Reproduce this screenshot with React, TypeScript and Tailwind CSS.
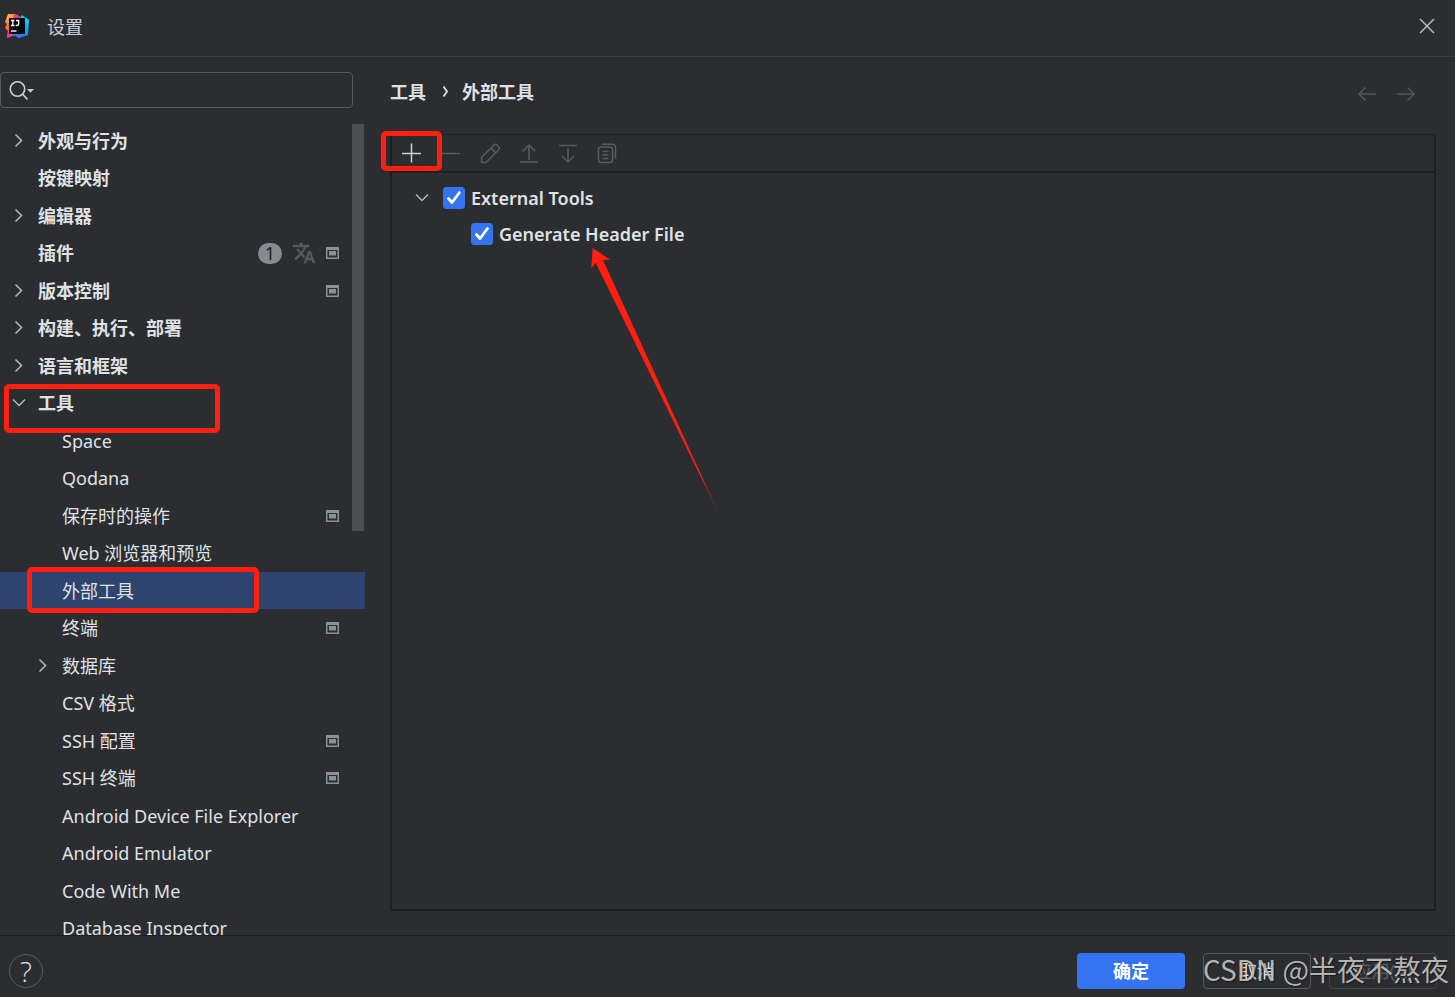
import type { ReactNode } from "react";
import { MdTranslate } from "react-icons/md";

type TreeItem = {
  label: string;
  child?: boolean;
  arrow?: "right" | "down";
  project?: boolean;
  plugin?: boolean;
  selected?: boolean;
  mark?: string;
};

const items: TreeItem[] = [
  { label: "外观与行为", arrow: "right" },
  { label: "按键映射" },
  { label: "编辑器", arrow: "right" },
  { label: "插件", project: true, plugin: true },
  { label: "版本控制", arrow: "right", project: true },
  { label: "构建、执行、部署", arrow: "right" },
  { label: "语言和框架", arrow: "right" },
  { label: "工具", arrow: "down", mark: "top-0 left-1 w-[216px] h-[49px]" },
  { label: "Space", child: true },
  { label: "Qodana", child: true },
  { label: "保存时的操作", child: true, project: true },
  { label: "Web 浏览器和预览", child: true },
  { label: "外部工具", child: true, selected: true, mark: "-top-[5px] left-[27px] w-[232px] h-[46px]" },
  { label: "终端", child: true, project: true },
  { label: "数据库", child: true, arrow: "right" },
  { label: "CSV 格式", child: true },
  { label: "SSH 配置", child: true, project: true },
  { label: "SSH 终端", child: true, project: true },
  { label: "Android Device File Explorer", child: true },
  { label: "Android Emulator", child: true },
  { label: "Code With Me", child: true },
  { label: "Database Inspector", child: true },
];

function Logo() {
  return (
    <svg width="24" height="24" viewBox="0 0 24 24" aria-hidden="true">
      <defs>
        <linearGradient id="warm" x1="0" y1="0" x2="0.5" y2="1">
          <stop offset="0" stopColor="#fcc84a" />
          <stop offset="0.45" stopColor="#ff7a2f" />
          <stop offset="1" stopColor="#fe2857" />
        </linearGradient>
        <linearGradient id="cool" x1="0.7" y1="0" x2="0.3" y2="1">
          <stop offset="0" stopColor="#07d8f5" />
          <stop offset="1" stopColor="#0878f0" />
        </linearGradient>
      </defs>
      <path d="M3 0h7l5 3 2 8-9 9-6 4 1-7-3-3 2-4-2-2z" fill="url(#warm)" />
      <path d="M9 0l4 1 4 5-2 6-7-6z" fill="#fe2d75" />
      <path d="M3 16l6 2 2 3-9 3z" fill="#f930a0" />
      <path d="M17 1l7 5-1 15-9 3-7-4 7-15z" fill="url(#cool)" />
      <path d="M7 20l5-1 4 4-2 1z" fill="#4b6df0" />
      <rect x="4" y="4" width="16" height="16" fill="#080508" />
      <path
        d="M6 6.500h3.500M7.800 6.500v5M6 11.500h3.500M11 6.500h2.700v3.200q0 1.800-1.900 1.800h-1"
        fill="none"
        stroke="#fff"
        strokeWidth="1.300"
      />
      <path d="M6 17h5.500" stroke="#fff" strokeWidth="1.400" />
    </svg>
  );
}

function Arrow({ dir }: { dir: "right" | "down" }) {
  return (
    <svg width="24" height="24" viewBox="0 0 24 24" fill="none" stroke="#b4b8bf" strokeWidth="1.500" aria-hidden="true">
      {dir === "right" ? <path d="M8.500 5.500l6 6-6 6" /> : <path d="M6 8.500l6 6 6-6" />}
    </svg>
  );
}

function ProjectIcon() {
  return (
    <svg width="13" height="12" viewBox="0 0 13 12" aria-hidden="true">
      <rect width="13" height="12" fill="#87939a" />
      <rect x="1.500" y="3" width="10" height="7.500" fill="#2b2d30" />
      <rect x="3" y="4" width="7" height="4.500" fill="#87939a" />
    </svg>
  );
}

function ToolButton({ label, active, children }: { label: string; active?: boolean; children: ReactNode }) {
  return (
    <button
      aria-label={label}
      disabled={!active}
      className={`flex w-[39px] h-9 items-center justify-center ${active ? "text-[#ced0d6]" : "text-[#5a5b5d]"}`}
    >
      <svg width="24" height="24" viewBox="0 0 24 24" fill="none" stroke="currentColor" strokeWidth="1.500" aria-hidden="true">
        {children}
      </svg>
    </button>
  );
}

function CheckRow({ id, label }: { id: string; label: string }) {
  return (
    <div className="flex items-center gap-1.5">
      <span className="grid">
        <input
          id={id}
          type="checkbox"
          defaultChecked
          className="peer col-start-1 row-start-1 w-[22px] h-[22px] appearance-none rounded-[3px] border border-[#6f737a] checked:border-[#3574f0] checked:bg-[#3574f0]"
        />
        <svg
          viewBox="0 0 22 22"
          fill="none"
          className="pointer-events-none invisible col-start-1 row-start-1 h-[22px] w-[22px] peer-checked:visible"
          aria-hidden="true"
        >
          <path d="M5.500 11.500l3.500 4L16.500 5.500" stroke="#fff" strokeWidth="2.800" strokeLinecap="round" strokeLinejoin="round" />
        </svg>
      </span>
      <label htmlFor={id} className="font-semibold">{label}</label>
    </div>
  );
}

function Mark({ className }: { className: string }) {
  return <div className={`pointer-events-none absolute z-10 rounded-[5px] border-[5px] border-[#ff1e10] ${className}`} />;
}

export default function App() {
  return (
    <div className="relative flex h-screen flex-col overflow-hidden bg-[#2b2d30] text-lg leading-6 text-[#dfe1e5] font-['Noto_Sans','Noto_Sans_CJK_SC',sans-serif]">
      {/* Title bar */}
      <header className="flex h-[57px] shrink-0 items-center border-b border-[#3c3e41] pb-1 pl-[5px] pr-4">
        <Logo />
        <h1 className="ml-[18px] flex-1 pt-0.5 text-[#ced0d6]">设置</h1>
        <button aria-label="关闭" className="text-[#b8babf]">
          <svg width="24" height="24" viewBox="0 0 24 24" fill="none" stroke="currentColor" strokeWidth="1.500">
            <path d="M5 5l14 14M19 5L5 19" />
          </svg>
        </button>
      </header>

      <div className="flex min-h-0 flex-1">
        {/* Sidebar */}
        <aside className="flex w-[365px] shrink-0 flex-col pt-[15px]">
          <div className="mr-3 flex h-9 shrink-0 items-center rounded border border-[#55585c] pl-2">
            <svg width="26" height="20" viewBox="0 0 26 20" fill="none" aria-hidden="true">
              <circle cx="8.500" cy="9" r="7.200" stroke="#ced0d6" strokeWidth="1.600" />
              <path d="M13.500 14l5 5.500" stroke="#ced0d6" strokeWidth="1.600" />
              <path d="M18 9h7l-3.500 3.800z" fill="#ced0d6" />
            </svg>
            <input aria-label="搜索" className="min-w-0 flex-1 bg-transparent px-2 outline-none" />
          </div>

          <div className="relative mt-3.5 min-h-0 flex-1 overflow-hidden">
            <ul>
              {items.map((item) => (
                <li
                  key={item.label}
                  className={`relative flex items-center odd:h-[37px] even:h-[38px] pr-[26px] ${
                    item.child ? "pl-[31px]" : "pl-[7px] font-bold"
                  } ${item.selected ? "bg-[#2e436e]" : ""}`}
                >
                  <span className="mr-[7px] w-6">{item.arrow && <Arrow dir={item.arrow} />}</span>
                  <button className="flex-1 text-left">{item.label}</button>
                  {item.plugin && (
                    <>
                      <span className="mr-2.5 flex h-[21px] w-6 items-center justify-center rounded-full bg-[#868a91] font-normal text-[#1e1f22]">
                        1
                      </span>
                      <MdTranslate
                        className="mr-2.5 size-6 text-[#545c61] [&>path:first-child]:stroke-none"
                        stroke="currentColor"
                        strokeWidth="0.500"
                      />
                    </>
                  )}
                  {item.project && <ProjectIcon />}
                  {item.mark && <Mark className={item.mark} />}
                </li>
              ))}
            </ul>
            <div className="absolute right-px top-0.5 h-1/2 w-3 bg-[#4d4e51]" />
          </div>
        </aside>

        {/* Content */}
        <main className="flex min-w-0 flex-1 flex-col pb-6 pl-[25px] pr-[19px] pt-[15px]">
          <div className="mb-[22px] flex h-10 shrink-0 items-center justify-between">
            <nav className="flex items-center font-bold">
              <a href="#tools">工具</a>
              <svg width="36" height="24" viewBox="0 0 36 24" fill="none" stroke="#dfe1e5" strokeWidth="1.800" aria-hidden="true">
                <path d="M17.500 6.500l3.500 5-3.500 5" />
              </svg>
              <a href="#external">外部工具</a>
            </nav>
            <div className="mr-[18px] flex gap-[15px] text-[#545557]">
              <button aria-label="后退" disabled>
                <svg width="24" height="24" viewBox="0 0 24 24" fill="none" stroke="currentColor" strokeWidth="1.700">
                  <path d="M21 14H4M10.500 7.500L4 14l6.500 6.500" />
                </svg>
              </button>
              <button aria-label="前进" disabled>
                <svg width="24" height="24" viewBox="0 0 24 24" fill="none" stroke="currentColor" strokeWidth="1.700">
                  <path d="M3 14h17M13.500 7.500L20 14l-6.500 6.500" />
                </svg>
              </button>
            </div>
          </div>

          <section className="flex min-h-0 flex-1 flex-col border-2 border-t border-[#1e1f22]">
            <div className="relative flex shrink-0 border-b-2 border-[#1e1f22]">
              <ToolButton label="添加" active>
                <path d="M11.500 2.500v19M2 12.500h19" />
              </ToolButton>
              <ToolButton label="移除">
                <path d="M2 12.500h19" />
              </ToolButton>
              <ToolButton label="编辑">
                <path d="M3.500 21.500v-5L16 4q1.500-1.500 3 0l1.700 1.700q1.500 1.500 0 3L8 21.500zM13 7l5 5" />
              </ToolButton>
              <ToolButton label="上移">
                <path d="M12 19V4M5.800 10.200L12 4l6.200 6.200M3 21h18" />
              </ToolButton>
              <ToolButton label="下移">
                <path d="M12 7v14M5.800 15L12 21l6.200-6M3 4.500h18" />
              </ToolButton>
              <ToolButton label="复制">
                <rect x="3.500" y="6" width="14" height="15.500" rx="2.500" />
                <path d="M7 3.200h10q3.500 0 3.500 3.500v11M7.500 10.500h6M7.500 14h6M7.500 17.500h6" />
              </ToolButton>
              <Mark className="-left-[11px] -top-1 h-10 w-[61px]" />
            </div>

            <div className="pt-[7px]">
              <div className="flex h-9 items-center pl-[18px]">
                <span className="mr-[9px]">
                  <Arrow dir="down" />
                </span>
                <CheckRow id="external-tools" label="External Tools" />
              </div>
              <div className="relative flex h-9 items-center pl-[79px]">
                <CheckRow id="generate-header" label="Generate Header File" />
                <svg width="130" height="268" viewBox="0 0 130 268" className="pointer-events-none absolute left-[198px] top-8" aria-hidden="true">
                  <defs>
                    <linearGradient id="tail" x1="0" y1="0" x2="0" y2="1">
                      <stop offset="0.850" stopColor="#ff1e10" />
                      <stop offset="1" stopColor="#ff1e10" stopOpacity="0.500" />
                    </linearGradient>
                  </defs>
                  <path d="M2.700 0L20.200 11.800 13 12 129 266 5.700 14.700 1.300 20.300z" fill="url(#tail)" />
                </svg>
              </div>
            </div>
          </section>
        </main>
      </div>

      {/* Footer */}
      <footer className="flex h-[62px] shrink-0 items-center gap-[18px] border-t border-[#1e1f22] pl-[9px] pr-[18px] pt-[9px]">
        <button
          aria-label="帮助"
          className="flex size-[34px] items-center justify-center rounded-full border border-[#5a5d63] text-[28px] font-light font-['Open_Sans',sans-serif]"
        >
          ?
        </button>
        <div className="flex-1" />
        <button className="h-9 w-[108px] rounded bg-[#3574f0] font-bold text-white">确定</button>
        <button className="h-9 w-[108px] rounded border border-[#55585c]">取消</button>
        <button disabled className="h-9 w-[108px] rounded border border-[#43454a] text-[#5a5d63]">应用(A)</button>
      </footer>

      <div className="pointer-events-none absolute bottom-2 right-1.5 text-[28px] leading-10 text-[#c8c8c8]/90 [text-shadow:1px_1px_1px_#00000080] font-['Noto_Sans_CJK_SC',sans-serif]">
        CSDN @半夜不熬夜
      </div>
    </div>
  );
}
